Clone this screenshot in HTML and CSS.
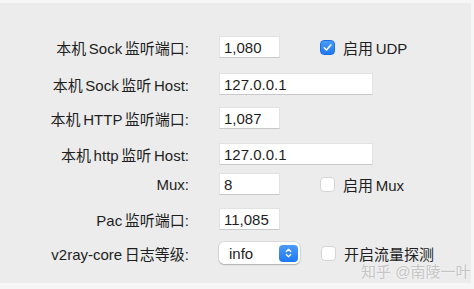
FILE: index.html
```html
<!DOCTYPE html>
<html>

<head>
    <title>V2rayU 高级设置</title>
    <link rel="stylesheet" href="styles.css">
</head>

<body>
    <div class="panel">
        <div class="form">
            <div class="row">
                <label class="label">本机 Sock 监听端口:</label>
                <div class="field short">1,080</div>
                <div class="check"><span class="box checked"><svg viewBox="0 0 16 16" width="11" height="11"><path d="M3.2 8.4 L6.6 11.6 L12.8 4.4" fill="none" stroke="#fff" stroke-width="2.2" stroke-linecap="round" stroke-linejoin="round"/></svg></span>启用 UDP</div>
            </div>
            <div class="row">
                <label class="label">本机 Sock 监听 Host:</label>
                <div class="field wide">127.0.0.1</div>
            </div>
            <div class="row">
                <label class="label">本机 HTTP 监听端口:</label>
                <div class="field short">1,087</div>
            </div>
            <div class="row">
                <label class="label">本机 http 监听 Host:</label>
                <div class="field wide">127.0.0.1</div>
            </div>
            <div class="row">
                <label class="label">Mux:</label>
                <div class="field short">8</div>
                <div class="check"><span class="box"></span>启用 Mux</div>
            </div>
            <div class="row">
                <label class="label">Pac 监听端口:</label>
                <div class="field short">11,085</div>
            </div>
            <div class="row">
                <label class="label">v2ray-core 日志等级:</label>
                <div class="popup">
                    <span>info</span>
                    <span class="stepper"><svg viewBox="0 0 12 16" width="9" height="12"><path d="M3 6 L6 3 L9 6 M3 10 L6 13 L9 10" fill="none" stroke="#fff" stroke-width="1.6" stroke-linecap="round" stroke-linejoin="round"/></svg></span>
                </div>
                <div class="check"><span class="box"></span>开启流量探测</div>
            </div>
        </div>
        <div class="watermark">知乎 @南陵一叶</div>
    </div>
</body>

</html>
```

FILE: styles.css
```css
body {
    margin: 0;
    background-color: #f6f6f6;
    font-family: 'Liberation Sans', 'Noto Sans CJK SC', sans-serif;
    font-size: 15px;
    color: #1e1e1e;
}

.panel {
    position: relative;
    margin-top: 3px;
    width: 471px;
    height: 280px;
    background-color: #ececec;
}

.form {
    display: flex;
    flex-direction: column;
    gap: 12px;
    padding-top: 33px;
}

.row {
    display: flex;
    align-items: center;
    height: 22px;
}

.row:nth-child(2) {
    margin-top: 3px;
}

.row:nth-child(4) {
    margin-top: 2px;
}

.row:nth-child(5) {
    margin-top: -4px;
}

.row:nth-child(6) {
    margin-top: 1px;
}

.label {
    width: 189px;
    margin-right: 30px;
    text-align: right;
    white-space: nowrap;
    word-spacing: -1.5px;
}

.field {
    box-sizing: border-box;
    height: 22px;
    padding: 0 4px;
    line-height: 21px;
    background-color: #fff;
    border: 1px solid #e2e2e2;
    border-bottom-color: #c9c9c9;
}

.short {
    width: 61px;
}

.wide {
    width: 154px;
}

.check {
    display: flex;
    align-items: center;
    margin-left: 40px;
    white-space: nowrap;
    word-spacing: -1.5px;
}

.popup + .check {
    margin-left: 21px;
}

.box {
    box-sizing: border-box;
    display: flex;
    align-items: center;
    justify-content: center;
    width: 15px;
    height: 15px;
    margin-right: 8px;
    background-color: #fff;
    border: 1px solid #d4d4d4;
    border-radius: 4px;
}

.box.checked {
    background: linear-gradient(#4b9bf8, #1f78f2);
    border-color: #1c6fe0;
}

.popup {
    box-sizing: border-box;
    display: flex;
    align-items: center;
    justify-content: space-between;
    width: 81px;
    height: 22px;
    padding: 0 2px 0 10px;
    background-color: #fff;
    border-radius: 5px;
    box-shadow: 0 0 0 0.5px rgba(0, 0, 0, 0.15), 0 1px 1.5px rgba(0, 0, 0, 0.2);
}

.stepper {
    display: flex;
    align-items: center;
    justify-content: center;
    width: 19px;
    height: 17px;
    border-radius: 4px;
    background: linear-gradient(#4b9bf8, #1f78f2);
}

.watermark {
    position: absolute;
    left: 361px;
    top: 257px;
    font-size: 15px;
    color: #c4c4c4;
    text-shadow: 0 0 2px #fff;
    white-space: nowrap;
}
```
